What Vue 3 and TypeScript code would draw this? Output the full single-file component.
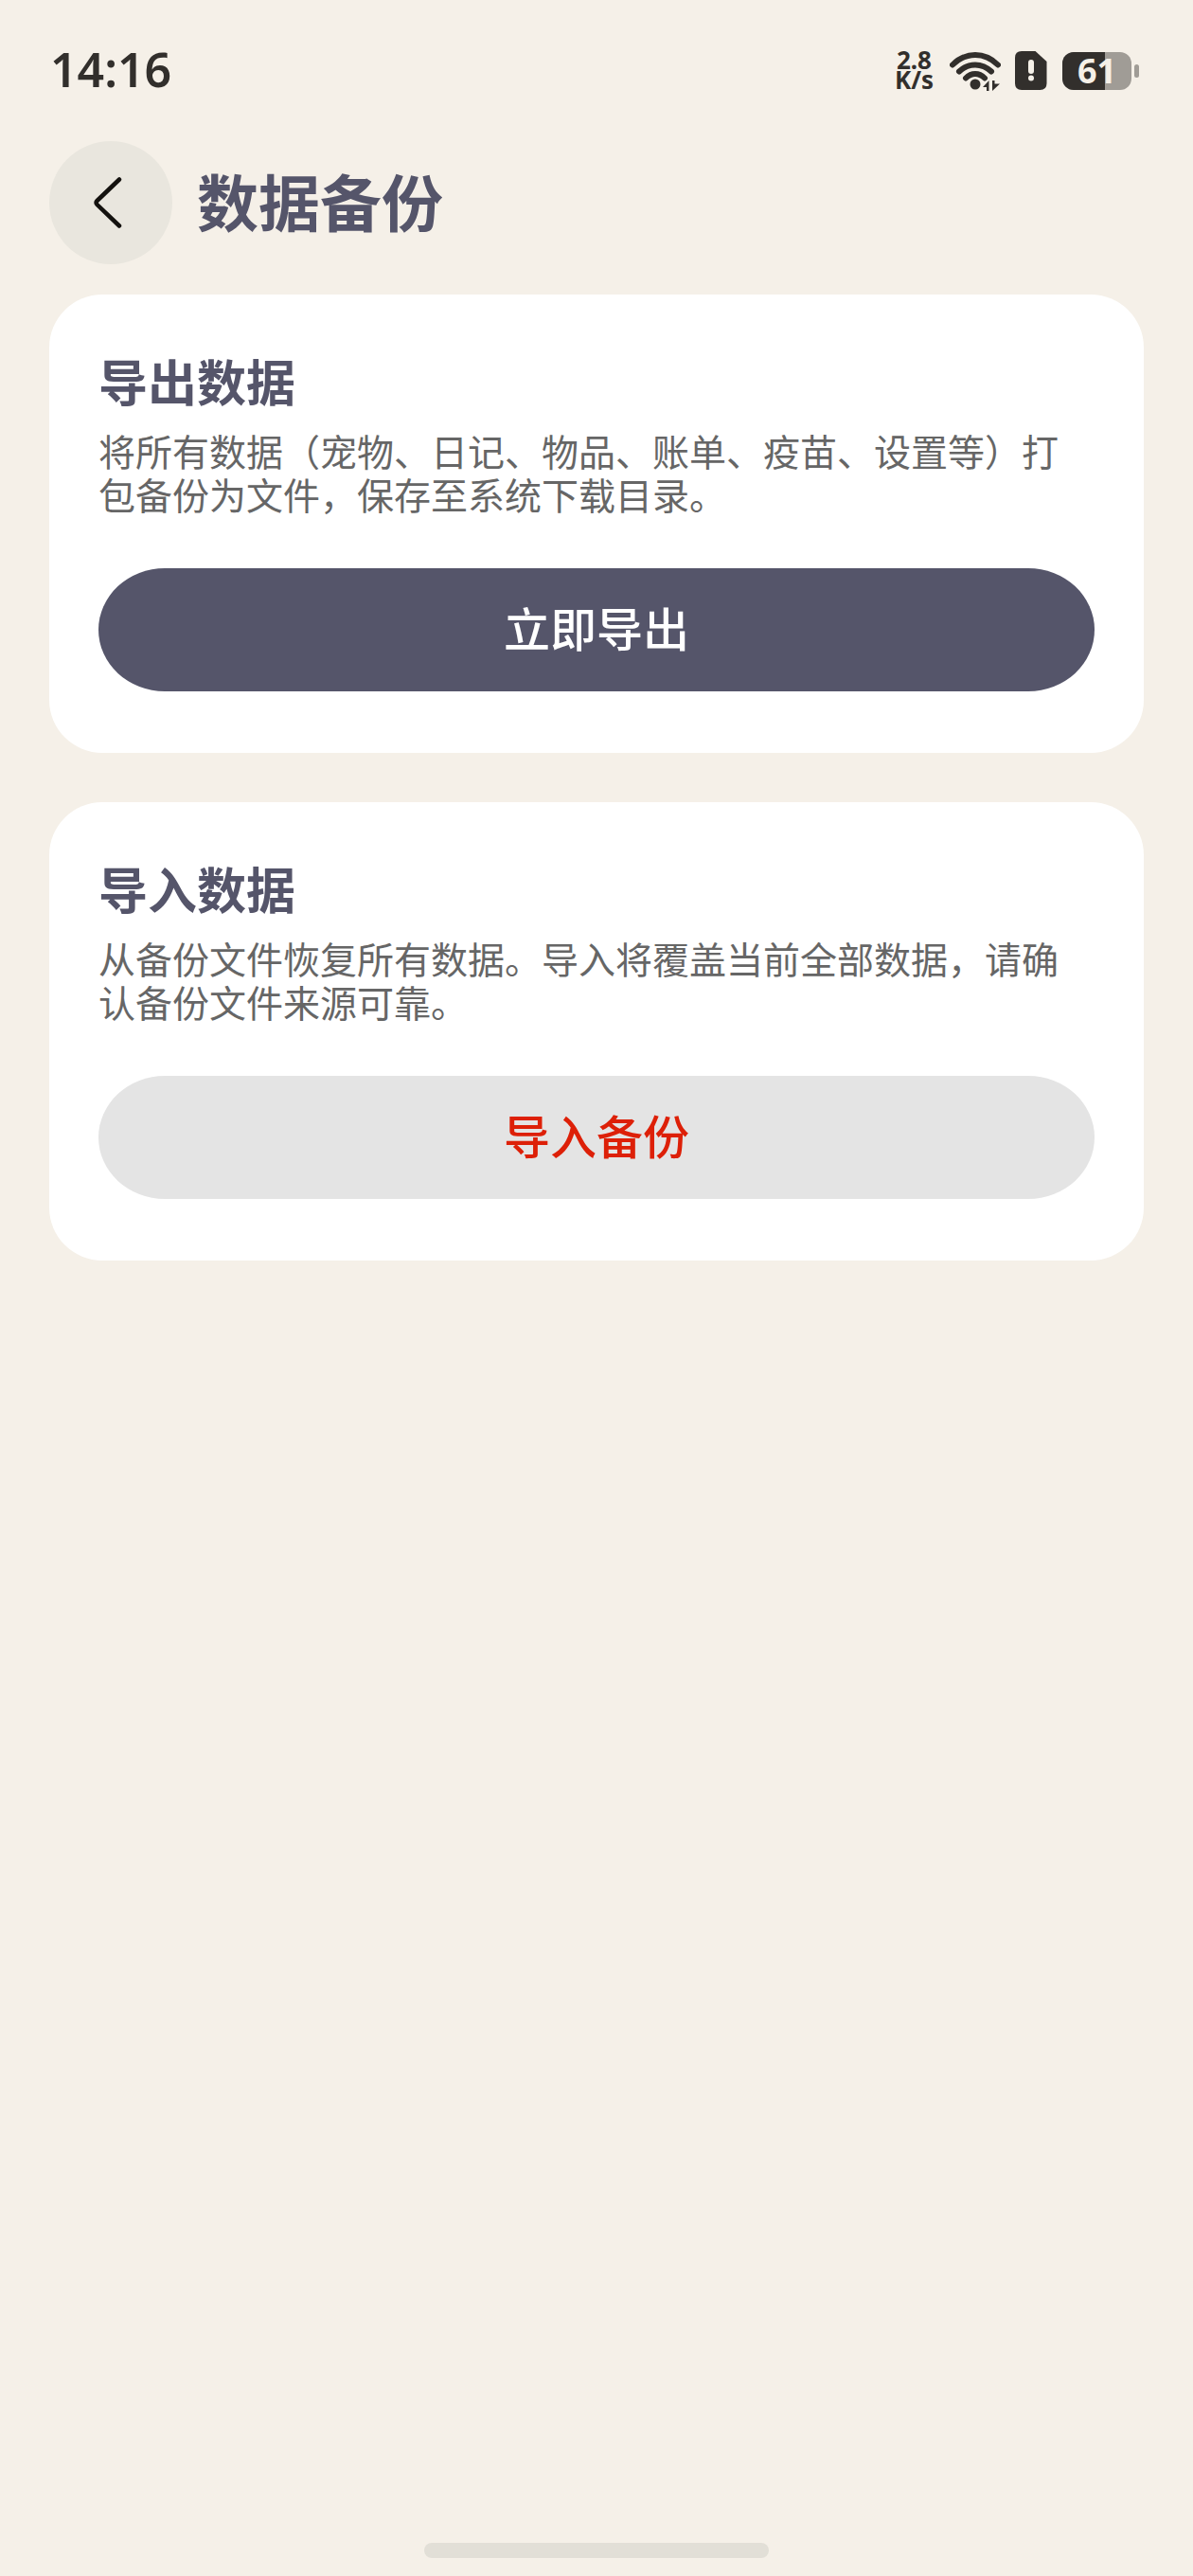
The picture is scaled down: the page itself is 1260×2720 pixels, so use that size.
<script setup lang="ts">
interface BackupCard {
  id: string
  title: string
  description: string
  action: string
  variant: 'primary' | 'danger'
}

const cards: BackupCard[] = [
  {
    id: 'export',
    title: '导出数据',
    description: '将所有数据（宠物、日记、物品、账单、疫苗、设置等）打包备份为文件，保存至系统下载目录。',
    action: '立即导出',
    variant: 'primary',
  },
  {
    id: 'import',
    title: '导入数据',
    description: '从备份文件恢复所有数据。导入将覆盖当前全部数据，请确认备份文件来源可靠。',
    action: '导入备份',
    variant: 'danger',
  },
]

const batteryLevel = 61
</script>

<template>
  <div class="screen">
    <div class="status-bar">
      <time class="clock">14:16</time>
      <div class="indicators">
        <div class="speed">2.8<br />K/s</div>
        <svg class="wifi" width="54" height="42" viewBox="0 0 54 42" aria-hidden="true">
          <g fill="none" stroke="currentColor" stroke-width="6" stroke-linecap="round">
            <path d="M3 14.500C17 .5 37 .5 51 14.500" />
            <path d="M10 21.500C20 12 34 12 44 21.500" />
            <path d="M17 28.500C23 22.500 31 22.500 37 28.500" />
          </g>
          <circle cx="27" cy="35" r="5.500" fill="currentColor" />
          <path d="M35 38L41.500 31V42H39V38ZM45 31H47.500V34.500H53L45 42Z" fill="currentColor" />
        </svg>
        <svg class="sim" width="34" height="42" viewBox="0 0 34 42" aria-hidden="true">
          <path d="M7 0H21.500L33.500 11V34Q33.500 41 26.500 41H7Q0 41 0 34V7Q0 0 7 0Z" fill="currentColor" />
          <path d="M17 12V21" stroke="#f5f0e8" stroke-width="6" stroke-linecap="round" />
          <circle cx="17" cy="28.500" r="3" fill="#f5f0e8" />
        </svg>
        <div class="battery">
          <div class="battery-body">
            <div class="battery-fill" :style="{ width: batteryLevel + '%' }"></div>
            <span class="battery-text">{{ batteryLevel }}</span>
          </div>
          <div class="battery-tip"></div>
        </div>
      </div>
    </div>

    <header class="header">
      <button class="back" type="button" aria-label="返回">
        <svg width="30" height="54" viewBox="0 0 30 54" aria-hidden="true">
          <path
            d="M27 2.500L3.500 25Q1.500 27 3.500 29L27 51.500"
            fill="none"
            stroke="currentColor"
            stroke-width="4.500"
            stroke-linecap="round"
            stroke-linejoin="round"
          />
        </svg>
      </button>
      <h1 class="page-title">数据备份</h1>
    </header>

    <main class="cards">
      <section v-for="card in cards" :key="card.id" class="card">
        <h2 class="card-title">{{ card.title }}</h2>
        <p class="card-text">{{ card.description }}</p>
        <button class="action" :class="card.variant" type="button">{{ card.action }}</button>
      </section>
    </main>

    <div class="home-indicator"></div>
  </div>
</template>

<style>
body {
  background: #f5f0e8;
}
</style>

<style scoped>
.screen {
  display: flex;
  flex-direction: column;
  box-sizing: border-box;
  min-height: 100vh;
  background: #f5f0e8;
  color: #322f2c;
  font-family: "Noto Sans CJK SC", "Noto Sans", sans-serif;
}

.status-bar {
  display: flex;
  align-items: center;
  justify-content: space-between;
  height: 149px;
  padding: 0 57px 0 53px;
  box-sizing: border-box;
  font-family: "Noto Sans", sans-serif;
}

.clock {
  padding-bottom: 4px;
  font-size: 50px;
  font-weight: 600;
  line-height: 60px;
}

.indicators {
  display: flex;
  align-items: center;
}

.speed {
  margin-right: 17px;
  padding-bottom: 2px;
  font-size: 26px;
  font-weight: 700;
  line-height: 21px;
  text-align: center;
}

.wifi {
  margin-right: 15px;
}

.sim {
  margin-right: 16px;
}

.battery {
  display: flex;
  align-items: center;
  gap: 3px;
}

.battery-body {
  position: relative;
  width: 73px;
  height: 40px;
  border-radius: 12px;
  background: #a09c96;
}

.battery-fill {
  height: 100%;
  border-radius: 12px 0 0 12px;
  background: #322f2c;
}

.battery-text {
  position: absolute;
  inset: 0;
  color: #f5f0e8;
  font-size: 36px;
  font-weight: 700;
  line-height: 40px;
  text-align: center;
}

.battery-tip {
  width: 5px;
  height: 14px;
  border-radius: 3px;
  background: #a09c96;
}

.header {
  display: flex;
  align-items: center;
  gap: 26px;
  padding: 0 52px;
}

.back {
  display: flex;
  align-items: center;
  justify-content: center;
  width: 130px;
  height: 130px;
  padding: 0 6px 0 0;
  border: 0;
  border-radius: 50%;
  background: #e9e6de;
  color: #14120f;
}

.page-title {
  margin: 0;
  padding-bottom: 6px;
  color: #55556a;
  font-size: 65px;
  font-weight: 700;
  line-height: 76px;
}

.cards {
  display: flex;
  flex-direction: column;
  gap: 52px;
  padding: 32px 52px;
}

.card {
  display: flex;
  flex-direction: column;
  padding: 60px 52px 65px;
  border-radius: 56px;
  background: #fff;
}

.card-title {
  margin: 0;
  color: #55556a;
  font-size: 52px;
  font-weight: 700;
  line-height: 61px;
}

.card-text {
  margin: 20px 0 56px;
  color: #666;
  font-size: 39px;
  line-height: 46px;
}

.action {
  height: 130px;
  padding: 0 0 6px;
  border: 0;
  border-radius: 70px / 65px;
  font-family: inherit;
  font-size: 49px;
  font-weight: 500;
  line-height: 58px;
}

.primary {
  background: #55556a;
  color: #fff;
}

.danger {
  background: #e4e4e4;
  color: #dd2008;
}

.home-indicator {
  width: 364px;
  height: 16px;
  margin: auto auto 19px;
  border-radius: 8px;
  background: #e2dfd7;
}
</style>
